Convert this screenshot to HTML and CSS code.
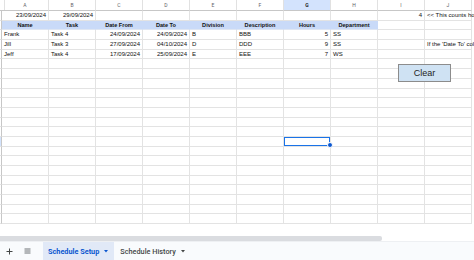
FILE: index.html
```html
<!DOCTYPE html>
<html>
<head>
<meta charset="utf-8">
<link rel="stylesheet" href="styles.css">
</head>
<body>
<div class="app">
  <div class="grid">
    <div class="c ch corner"></div><div class="c ch">A</div><div class="c ch">B</div><div class="c ch">C</div><div class="c ch">D</div><div class="c ch">E</div><div class="c ch">F</div><div class="c ch on">G</div><div class="c ch">H</div><div class="c ch">I</div><div class="c ch">J</div>

    <div class="c rh"></div><div class="c num">23/09/2024</div><div class="c num">29/09/2024</div><div class="c"></div><div class="c"></div><div class="c"></div><div class="c"></div><div class="c"></div><div class="c"></div><div class="c num">4</div><div class="c ov">&lt;&lt; This counts how many tasks are listed</div>

    <div class="c rh"></div><div class="c hd">Name</div><div class="c hd">Task</div><div class="c hd">Date From</div><div class="c hd">Date To</div><div class="c hd">Division</div><div class="c hd">Description</div><div class="c hd">Hours</div><div class="c hd">Department</div><div class="c"></div><div class="c"></div>

    <div class="c rh"></div><div class="c">Frank</div><div class="c">Task 4</div><div class="c num">24/09/2024</div><div class="c num">24/09/2024</div><div class="c">B</div><div class="c">BBB</div><div class="c num">5</div><div class="c">SS</div><div class="c"></div><div class="c"></div>

    <div class="c rh"></div><div class="c">Jill</div><div class="c">Task 3</div><div class="c num">27/09/2024</div><div class="c num">04/10/2024</div><div class="c">D</div><div class="c">DDD</div><div class="c num">9</div><div class="c">SS</div><div class="c"></div><div class="c ov">If the 'Date To' column is in the past</div>

    <div class="c rh"></div><div class="c">Jeff</div><div class="c">Task 4</div><div class="c num">17/09/2024</div><div class="c num">25/09/2024</div><div class="c">E</div><div class="c">EEE</div><div class="c num">7</div><div class="c">WS</div><div class="c"></div><div class="c"></div>

    <div class="c rh"></div><div class="c"></div><div class="c"></div><div class="c"></div><div class="c"></div><div class="c"></div><div class="c"></div><div class="c"></div><div class="c"></div><div class="c"></div><div class="c"></div>
    <div class="c rh"></div><div class="c"></div><div class="c"></div><div class="c"></div><div class="c"></div><div class="c"></div><div class="c"></div><div class="c"></div><div class="c"></div><div class="c"></div><div class="c"></div>
    <div class="c rh"></div><div class="c"></div><div class="c"></div><div class="c"></div><div class="c"></div><div class="c"></div><div class="c"></div><div class="c"></div><div class="c"></div><div class="c"></div><div class="c"></div>
    <div class="c rh"></div><div class="c"></div><div class="c"></div><div class="c"></div><div class="c"></div><div class="c"></div><div class="c"></div><div class="c"></div><div class="c"></div><div class="c"></div><div class="c"></div>
    <div class="c rh"></div><div class="c"></div><div class="c"></div><div class="c"></div><div class="c"></div><div class="c"></div><div class="c"></div><div class="c"></div><div class="c"></div><div class="c"></div><div class="c"></div>
    <div class="c rh"></div><div class="c"></div><div class="c"></div><div class="c"></div><div class="c"></div><div class="c"></div><div class="c"></div><div class="c"></div><div class="c"></div><div class="c"></div><div class="c"></div>
    <div class="c rh"></div><div class="c"></div><div class="c"></div><div class="c"></div><div class="c"></div><div class="c"></div><div class="c"></div><div class="c"></div><div class="c"></div><div class="c"></div><div class="c"></div>
    <div class="c rh"></div><div class="c"></div><div class="c"></div><div class="c"></div><div class="c"></div><div class="c"></div><div class="c"></div><div class="c"></div><div class="c"></div><div class="c"></div><div class="c"></div>
    <div class="c rh on"></div><div class="c"></div><div class="c"></div><div class="c"></div><div class="c"></div><div class="c"></div><div class="c"></div><div class="c sel"></div><div class="c"></div><div class="c"></div><div class="c"></div>
    <div class="c rh"></div><div class="c"></div><div class="c"></div><div class="c"></div><div class="c"></div><div class="c"></div><div class="c"></div><div class="c"></div><div class="c"></div><div class="c"></div><div class="c"></div>
    <div class="c rh"></div><div class="c"></div><div class="c"></div><div class="c"></div><div class="c"></div><div class="c"></div><div class="c"></div><div class="c"></div><div class="c"></div><div class="c"></div><div class="c"></div>
    <div class="c rh"></div><div class="c"></div><div class="c"></div><div class="c"></div><div class="c"></div><div class="c"></div><div class="c"></div><div class="c"></div><div class="c"></div><div class="c"></div><div class="c"></div>
    <div class="c rh"></div><div class="c"></div><div class="c"></div><div class="c"></div><div class="c"></div><div class="c"></div><div class="c"></div><div class="c"></div><div class="c"></div><div class="c"></div><div class="c"></div>
    <div class="c rh"></div><div class="c"></div><div class="c"></div><div class="c"></div><div class="c"></div><div class="c"></div><div class="c"></div><div class="c"></div><div class="c"></div><div class="c"></div><div class="c"></div>
    <div class="c rh"></div><div class="c"></div><div class="c"></div><div class="c"></div><div class="c"></div><div class="c"></div><div class="c"></div><div class="c"></div><div class="c"></div><div class="c"></div><div class="c"></div>
    <div class="c rh"></div><div class="c"></div><div class="c"></div><div class="c"></div><div class="c"></div><div class="c"></div><div class="c"></div><div class="c"></div><div class="c"></div><div class="c"></div><div class="c"></div>
    <div class="c rh"></div><div class="c"></div><div class="c"></div><div class="c"></div><div class="c"></div><div class="c"></div><div class="c"></div><div class="c"></div><div class="c"></div><div class="c"></div><div class="c"></div>

    <button class="clear">Clear</button>
  </div>
  <div class="hscroll"><div class="thumb"></div></div>
  <div class="tabbar">
    <div class="tbtn">
      <svg width="7" height="7" viewBox="0 0 7 7"><path d="M3.5 0.5v6M0.5 3.5h6" stroke="#444746" stroke-width="1" fill="none"/></svg>
    </div>
    <div class="tbtn">
      <svg width="7" height="6" viewBox="0 0 7 6"><path d="M0.5 1h6M0.5 3h6M0.5 5h6" stroke="#5f6368" stroke-width="0.9" fill="none"/></svg>
    </div>
    <div class="tab active">Schedule Setup<svg class="caret" width="4" height="3" viewBox="0 0 4 3"><path d="M0 0h4L2 2.5z" fill="#0b57d0"/></svg></div>
    <div class="tab">Schedule History<svg class="caret" width="4" height="3" viewBox="0 0 4 3"><path d="M0 0h4L2 2.5z" fill="#444746"/></svg></div>
  </div>
</div>
</body>
</html>
```

FILE: styles.css
```css
html, body {
  margin: 0;
  padding: 0;
}
body {
  width: 474px;
  height: 260px;
  overflow: hidden;
  background: #fff;
  font-family: "Liberation Sans", Arial, sans-serif;
}
.app {
  display: flex;
  flex-direction: column;
  height: 260px;
}
.grid {
  position: relative;
  display: grid;
  grid-template-columns: 2px repeat(10, 47px);
  grid-template-rows: 11px;
  grid-auto-rows: 9.7px;
  height: 236px;
  overflow: hidden;
  flex: none;
}
.c {
  box-sizing: border-box;
  border-right: 1px solid #e3e3e3;
  border-bottom: 1px solid #e3e3e3;
  font-size: 6px;
  line-height: 8.7px;
  padding: 0 2px;
  white-space: nowrap;
  color: #111;
  min-width: 0;
}
.ch {
  font-family: Roboto, "Liberation Sans", sans-serif;
  font-size: 5px;
  line-height: 10px;
  text-align: center;
  color: #5f6368;
  border-bottom-color: #c7c7c7;
  border-right-color: #e1e1e1;
}
.ch.on {
  background: #d3e3fd;
  color: #1f1f1f;
  font-weight: bold;
}
.rh {
  padding: 0;
  border-right-color: #c7c7c7;
}
.rh.on {
  background: #d3e3fd;
}
.hd {
  background: #c9daf8;
  font-weight: bold;
  font-size: 5.6px;
  text-align: center;
  border-right-color: #c9daf8;
  border-bottom-color: #dfe6f2;
}
.num {
  text-align: right;
}
.ov {
  overflow: visible;
}
.sel {
  position: relative;
  box-shadow: inset 0 0 0 1px #1a73e8;
}
.sel::after {
  content: "";
  position: absolute;
  right: -2.5px;
  bottom: -2.5px;
  width: 4px;
  height: 4px;
  border-radius: 50%;
  background: #0b57d0;
  border: 0.5px solid #fff;
}
.clear {
  position: absolute;
  left: 398px;
  top: 64px;
  width: 53px;
  height: 18px;
  box-sizing: border-box;
  margin: 0;
  padding: 0;
  background: #cfe2f3;
  border: 1px solid #8c8c8c;
  border-radius: 0;
  font-family: "Liberation Sans", Arial, sans-serif;
  font-size: 9px;
  color: #222;
}
.hscroll {
  height: 5px;
  flex: none;
  display: flex;
  background: #fff;
  border-bottom: 1px solid #eef0f3;
}
.thumb {
  width: 382px;
  background: #dadce0;
  border-radius: 0 2px 2px 0;
}
.tabbar {
  flex: 1;
  display: flex;
  align-items: stretch;
  background: #f9fbfd;
  font-family: Roboto, "Liberation Sans", sans-serif;
  font-weight: 500;
  font-size: 7.3px;
  color: #444746;
}
.tbtn {
  width: 19px;
  display: flex;
  align-items: center;
  justify-content: center;
}
.tbtn:first-child {
  width: 18px;
}
.tab {
  display: flex;
  align-items: center;
  padding: 0 5px 0 6px;
  white-space: nowrap;
}
.tab.active {
  margin-left: 6px;
  padding: 0 6px 0 5px;
  background: #e1e9f7;
  color: #0b57d0;
  font-weight: 700;
}
.caret {
  margin-left: 5px;
}
```
